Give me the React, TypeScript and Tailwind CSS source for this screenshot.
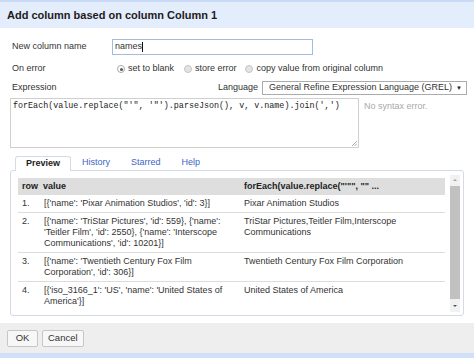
import React from "react";

const Radio = ({ checked }: { checked?: boolean }) => (
  <span
    className={`w-[8px] h-[8px] rounded-full border flex items-center justify-center shrink-0 ${
      checked ? "border-[#a8a8a8] bg-white" : "border-[#c4c4c4] bg-[#e4e4e4]"
    }`}
  >
    {checked && <span className="w-[3px] h-[3px] rounded-full bg-[#555]" />}
  </span>
);

const rows = [
  {
    n: "1.",
    value: "[{'name': 'Pixar Animation Studios', 'id': 3}]",
    result: "Pixar Animation Studios",
  },
  {
    n: "2.",
    value:
      "[{'name': 'TriStar Pictures', 'id': 559}, {'name': 'Teitler Film', 'id': 2550}, {'name': 'Interscope Communications', 'id': 10201}]",
    result: "TriStar Pictures,Teitler Film,Interscope Communications",
  },
  {
    n: "3.",
    value: "[{'name': 'Twentieth Century Fox Film Corporation', 'id': 306}]",
    result: "Twentieth Century Fox Film Corporation",
  },
  {
    n: "4.",
    value: "[{'iso_3166_1': 'US', 'name': 'United States of America'}]",
    result: "United States of America",
  },
];

const App = () => {
  return (
    <div className="w-[474px] h-[358px] flex flex-col overflow-hidden bg-white text-[9px] text-[#333] font-['Liberation_Sans',Arial,sans-serif]">
      <div className="h-[2px] bg-[#c8daf5]" />
      <div className="h-[26px] bg-[#e4edfc] flex items-center pl-[7px] text-[11px] font-bold text-[#1c1c1c]">
        Add column based on column Column 1
      </div>

      <div className="flex flex-col px-[10px] pt-[11px]">
        {/* new column name */}
        <div className="flex items-center h-[16px]">
          <div className="w-[102px] pl-[2px]">New column name</div>
          <div className="w-[201px] h-[16px] border border-[#a3bbdc] flex items-center pl-[2px]">
            names
            <span className="w-px h-[10px] bg-[#111]" />
          </div>
        </div>

        {/* on error */}
        <div className="flex items-center h-[12px] mt-[8px]">
          <div className="w-[102px] pl-[2px]">On error</div>
          <div className="flex items-center ml-[5px]">
            <Radio checked />
            <span className="ml-[3px]">set to blank</span>
            <span className="ml-[10px]">
              <Radio />
            </span>
            <span className="ml-[3px]">store error</span>
            <span className="ml-[8px]">
              <Radio />
            </span>
            <span className="ml-[4px]">copy value from original column</span>
          </div>
        </div>

        {/* expression + language */}
        <div className="flex items-center h-[14px] mt-[6px]">
          <div className="pl-[2px]">Expression</div>
          <div className="ml-auto">Language</div>
          <div className="ml-[4px] mr-[-3px] w-[205px] h-[14px] border border-[#ababab] bg-white flex items-center pl-[6px] pr-[4px]">
            <span>General Refine Expression Language (GREL)</span>
            <span className="ml-auto text-[6px] text-[#222]">▼</span>
          </div>
        </div>

        {/* textarea */}
        <div className="flex mt-[3px]">
          <div className="relative w-[349px] h-[50px] border border-[#cfcfcf] px-[2px] pt-[2px] font-['Liberation_Mono','Courier_New',monospace] text-[8.4px] leading-[10px] text-[#222]">
            forEach(value.replace("'", '"').parseJson(), v, v.name).join(',')
            <svg
              className="absolute right-[1px] bottom-[1px]"
              width="6"
              height="6"
              viewBox="0 0 6 6"
            >
              <path d="M1 6 L6 1 M3.5 6 L6 3.5" stroke="#999" strokeWidth="0.8" />
            </svg>
          </div>
          <div className="ml-[5px] pt-[2px] text-[#a9a9a9]">No syntax error.</div>
        </div>

        {/* tabs */}
        <div className="flex mt-[8px] ml-[5px] gap-[1px] h-[14px] relative z-10">
          <div className="h-[15px] px-[10px] flex items-center border border-b-0 border-[#d3dbe7] rounded-t-[3px] bg-white font-bold text-[#222]">
            Preview
          </div>
          <div className="px-[10px] flex items-center text-[#3c66c6]">History</div>
          <div className="px-[10px] flex items-center text-[#3c66c6]">Starred</div>
          <div className="px-[10px] flex items-center text-[#3c66c6]">Help</div>
        </div>

        {/* tab panel */}
        <div className="h-[146px] border border-[#d3dbe7] rounded-[3px] pt-[4px] pl-[7px] pr-[3px] pb-[3px]">
          <div className="h-full flex overflow-hidden">
            <div className="w-[427px] pt-[3px]">
              <div className="flex h-[17px] items-center bg-[#dedede] font-bold text-[#222]">
                <div className="w-[22px] pl-[4px]">row</div>
                <div className="w-[200px] pl-[3px]">value</div>
                <div className="flex-1 pl-[4px]">forEach(value.replace("'"", "" ...</div>
              </div>
              {rows.map((r, i) => (
                <div
                  key={r.n}
                  className={`flex leading-[11px] ${i < 3 ? "border-b border-[#dcdcdc]" : ""}`}
                >
                  <div className="w-[22px] pl-[4px] py-[3px]">{r.n}</div>
                  <div className="w-[200px] px-[4px] py-[3px]">{r.value}</div>
                  <div className="flex-1 pl-[4px] pr-[2px] py-[3px]">{r.result}</div>
                </div>
              ))}
            </div>

            {/* scrollbar */}
            <div className="ml-auto w-[10px] h-full bg-[#f1f1f1] flex flex-col items-center">
              <svg width="6" height="10" viewBox="0 0 6 10" className="shrink-0">
                <path d="M1 6 L3 4 L5 6 Z" fill="#a3a3a3" />
              </svg>
              <div className="w-[10px] flex-1 mt-[1px] mb-[1px] bg-[#c1c1c1]" />
              <svg width="6" height="12" viewBox="0 0 6 12" className="shrink-0">
                <path d="M1 5 L5 5 L3 7 Z" fill="#505050" />
              </svg>
            </div>
          </div>
        </div>
      </div>

      {/* footer */}
      <div className="mt-auto h-[30px] bg-[#eeeeee] flex items-center pl-[7px] gap-[4px]">
        <button className="w-[31px] h-[17px] border border-[#c6c6c6] rounded-[2px] bg-[#f7f7f7] text-[9.5px] text-[#333]">
          OK
        </button>
        <button className="h-[17px] px-[5px] border border-[#c6c6c6] rounded-[2px] bg-[#f7f7f7] text-[9.5px] text-[#333]">
          Cancel
        </button>
      </div>
      <div className="h-[5px] bg-[#cfe0f8]" />
    </div>
  );
};

export default App;
